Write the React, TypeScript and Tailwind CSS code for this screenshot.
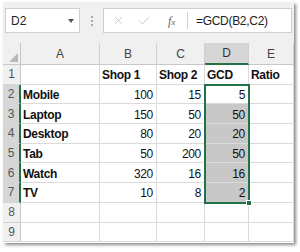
import React from 'react';
import { X, Check } from 'lucide-react';

const cols = ['A', 'B', 'C', 'D', 'E'];
const widths = ['w-[79px]', 'w-[57px]', 'w-[48px]', 'w-[44px]', 'flex-1'];

const rows: { label: string; b: string; c: string; d: string }[] = [
  { label: 'Mobile', b: '100', c: '15', d: '5' },
  { label: 'Laptop', b: '150', c: '50', d: '50' },
  { label: 'Desktop', b: '80', c: '20', d: '20' },
  { label: 'Tab', b: '50', c: '200', d: '50' },
  { label: 'Watch', b: '320', c: '16', d: '16' },
  { label: 'TV', b: '10', c: '8', d: '2' },
];

const RowHead: React.FC<{ n: number; active?: boolean }> = ({ n, active }) => (
  <div
    className={
      'w-[18px] shrink-0 flex items-center justify-center border-b border-[#d4d4d4] text-[12px] ' +
      (active
        ? 'bg-[#d6d6d6] text-[#555] border-r-2 border-r-[#217346]'
        : 'bg-[#f0f0f0] text-[#555] border-r border-r-[#c8c8c8]')
    }
  >
    {n}
  </div>
);

const Cell: React.FC<{ w: string; children?: React.ReactNode; right?: boolean; bold?: boolean; fill?: boolean }> = ({
  w,
  children,
  right,
  bold,
  fill,
}) => (
  <div
    className={
      w +
      ' shrink-0 flex items-center pt-[2px] border-r border-b border-[#dadada] text-[12px] text-[#111] tracking-tight ' +
      (right ? 'justify-end pr-[3px] ' : 'pl-[2px] ') +
      (bold ? 'font-bold ' : '') +
      (fill ? 'bg-[#c8c8c8]' : 'bg-white')
    }
  >
    {children}
  </div>
);

export default function App() {
  return (
    <div className="w-[300px] h-[252px] bg-white pt-[2px] pl-[3px]" style={{ fontFamily: '"Liberation Sans", Arial, sans-serif' }}>
      <div className="w-[291px] h-[241px] bg-white shadow-[2px_2px_3px_rgba(0,0,0,0.45)] flex flex-col overflow-hidden">
        {/* Formula bar */}
        <div className="h-[41px] shrink-0 bg-[#f0f0f0] pt-[6px] pl-[2px] pr-[2px] flex items-start">
          <div className="w-[75px] h-[25px] bg-white border border-[#cfcfcf] flex items-center justify-between pl-[5px] pr-[5px] text-[12px] text-[#222]">
            <span>D2</span>
            <span className="w-0 h-0 border-l-[3px] border-r-[3px] border-t-[4px] border-l-transparent border-r-transparent border-t-[#555]" />
          </div>
          <div className="w-[23px] h-[25px] flex flex-col items-center justify-center gap-[2px]">
            <span className="w-[2px] h-[2px] bg-[#aaa]" />
            <span className="w-[2px] h-[2px] bg-[#aaa]" />
            <span className="w-[2px] h-[2px] bg-[#aaa]" />
          </div>
          <div className="flex-1 h-[25px] bg-white border border-[#cfcfcf] flex items-center">
            <div className="w-[83px] h-full flex items-center pl-[8px] gap-[12px] text-[#bdbdbd]">
              <X size={13} strokeWidth={1.4} />
              <Check size={14} strokeWidth={1.4} />
              <span className="text-[12px] text-[#666] italic ml-[5px]" style={{ fontFamily: '"Liberation Serif", serif' }}>
                f<span className="text-[9px]">x</span>
              </span>
            </div>
            <div className="w-px h-[17px] bg-[#d0d0d0]" />
            <span className="pl-[8px] text-[12px] text-[#222] tracking-tight">=GCD(B2,C2)</span>
          </div>
        </div>

        {/* Column headers */}
        <div className="h-[22px] shrink-0 flex bg-[#f0f0f0]">
          <div className="w-[18px] shrink-0 border-r border-b border-[#c8c8c8] relative">
            <span className="absolute right-[2px] bottom-[2px] w-0 h-0 border-l-[9px] border-b-[9px] border-l-transparent border-b-[#b8b8b8]" />
          </div>
          {cols.map((c, i) => (
            <div
              key={c}
              className={
                widths[i] +
                ' shrink-0 flex items-center justify-center text-[12px] border-r border-[#d0d0d0] ' +
                (c === 'D'
                  ? 'bg-[#d6d6d6] text-[#333] border-b-2 border-b-[#217346]'
                  : 'text-[#444] border-b border-b-[#c8c8c8]')
              }
            >
              {c}
            </div>
          ))}
        </div>

        {/* Body */}
        <div className="relative flex-1 flex flex-col">
          <div className="h-[19.7px] flex">
            <RowHead n={1} />
            <Cell w={widths[0]} />
            <Cell w={widths[1]} bold>Shop 1</Cell>
            <Cell w={widths[2]} bold>Shop 2</Cell>
            <Cell w={widths[3]} bold>GCD</Cell>
            <Cell w={widths[4]} bold>Ratio</Cell>
          </div>
          {rows.map((r, i) => (
            <div key={r.label} className="h-[19.7px] flex">
              <RowHead n={i + 2} active />
              <Cell w={widths[0]} bold>{r.label}</Cell>
              <Cell w={widths[1]} right>{r.b}</Cell>
              <Cell w={widths[2]} right>{r.c}</Cell>
              <Cell w={widths[3]} right fill={i > 0}>{r.d}</Cell>
              <Cell w={widths[4]} />
            </div>
          ))}
          {[8, 9].map((n) => (
            <div key={n} className="h-[19.7px] flex">
              <RowHead n={n} />
              {widths.map((w, i) => (
                <Cell key={i} w={w} />
              ))}
            </div>
          ))}

          {/* Selection D2:D7 */}
          <div className="absolute left-[201px] top-[18.7px] w-[46px] h-[120.2px] border-2 border-[#217346] pointer-events-none">
            <span className="absolute -right-[4px] -bottom-[4px] w-[6px] h-[6px] bg-[#217346] border border-white" />
          </div>
        </div>
      </div>
    </div>
  );
}
